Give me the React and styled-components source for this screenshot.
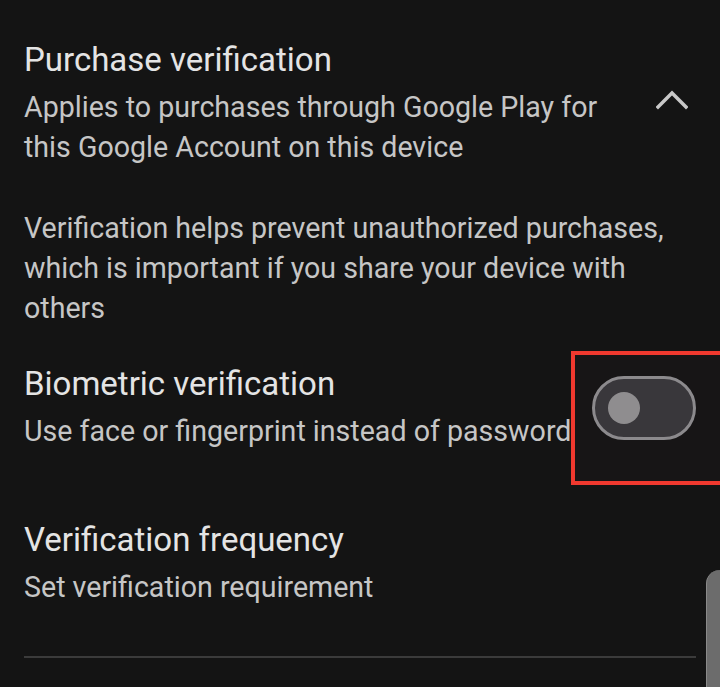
import styled, { createGlobalStyle } from 'styled-components';

const GlobalStyle = createGlobalStyle`
  html, body {
    margin: 0;
    padding: 0;
    background: #141414;
  }
  body {
    font-family: Roboto, "Noto Sans", sans-serif;
    -webkit-font-smoothing: antialiased;
  }
`;

const Page = styled.div`
  position: relative;
  width: 720px;
  height: 687px;
  overflow: hidden;
  background: #141414;
  padding: 40px 24px 0;
  box-sizing: border-box;
`;

const Header = styled.div`
  display: flex;
  align-items: flex-start;
  justify-content: space-between;
`;

const TextBlock = styled.div`
  display: flex;
  flex-direction: column;
  gap: 7px;
`;

const Title = styled.div`
  font-size: 33px;
  line-height: 40px;
  color: #e4e4e4;
`;

const Subtitle = styled.div`
  font-size: 28.6px;
  line-height: 40px;
  color: #c6c6c6;
  white-space: ${({ $nowrap }) => ($nowrap ? 'nowrap' : 'normal')};
`;

const Chevron = styled.div`
  margin-top: 50px;
  margin-right: 8px;
  width: 32px;
  height: 20px;
  color: #c8c8c8;
  display: flex;
`;

const Paragraph = styled(Subtitle)`
  margin-top: 41px;
  max-width: 660px;
`;

const Row = styled.div`
  position: relative;
  display: flex;
  align-items: center;
  justify-content: space-between;
  margin-top: ${({ $top }) => $top}px;
`;

const Toggle = styled.div`
  position: relative;
  z-index: 2;
  flex-shrink: 0;
  width: 104px;
  height: 64px;
  box-sizing: border-box;
  border: 3px solid #8c8a8d;
  border-radius: 32px;
  background: #39373b;
  display: flex;
  align-items: center;
  padding-left: 13px;
`;

const Thumb = styled.span`
  width: 32px;
  height: 32px;
  border-radius: 50%;
  background: #8f8d8f;
`;

const Highlight = styled.div`
  position: absolute;
  z-index: 1;
  left: 547px;
  top: -13px;
  width: 180px;
  height: 134px;
  box-sizing: border-box;
  border: 4px solid #f0392f;
  background: #171516;
`;

const Divider = styled.div`
  margin-top: 49px;
  height: 2px;
  background: #3b3b3b;
`;

const ScrollThumb = styled.div`
  position: absolute;
  right: 0;
  top: 570px;
  width: 13px;
  height: 140px;
  border-top-left-radius: 14px;
  background: #6c6c6c;
  border-left: 1px solid #8a8a8a;
`;

const ChevronUp = () => (
  <svg width="32" height="20" viewBox="0 0 32 20" fill="none">
    <path d="M2 17 L16 3 L30 17" stroke="currentColor" strokeWidth="3.4" strokeLinecap="square" />
  </svg>
);

export default function App() {
  return (
    <>
      <GlobalStyle />
      <Page>
        <Header>
          <TextBlock>
            <Title>Purchase verification</Title>
            <Subtitle>
              Applies to purchases through Google Play for
              <br />
              this Google Account on this device
            </Subtitle>
          </TextBlock>
          <Chevron>
            <ChevronUp />
          </Chevron>
        </Header>

        <Paragraph>
          Verification helps prevent unauthorized purchases, which is important if you share your device with others
        </Paragraph>

        <Row $top={36}>
          <TextBlock>
            <Title>Biometric verification</Title>
            <Subtitle $nowrap>Use face or fingerprint instead of password</Subtitle>
          </TextBlock>
          <Highlight />
          <Toggle>
            <Thumb />
          </Toggle>
        </Row>

        <Row $top={69}>
          <TextBlock>
            <Title>Verification frequency</Title>
            <Subtitle>Set verification requirement</Subtitle>
          </TextBlock>
        </Row>

        <Divider />
        <ScrollThumb />
      </Page>
    </>
  );
}
